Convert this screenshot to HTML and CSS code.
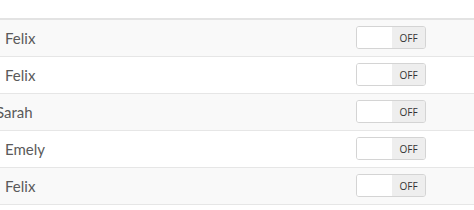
FILE: index.html
```html
<!DOCTYPE html>
<html lang="en">
<head>
  <meta charset="UTF-8" />
  <title>Users</title>
  <link rel="stylesheet" href="styles.css">
</head>
<body>
  <div class="lista">
    <div class="linha">
      <span class="nome">Felix</span>
      <span class="toggle"><span class="lado"></span><span class="off">OFF</span></span>
    </div>
    <div class="linha">
      <span class="nome">Felix</span>
      <span class="toggle"><span class="lado"></span><span class="off">OFF</span></span>
    </div>
    <div class="linha">
      <span class="nome recuado">Sarah</span>
      <span class="toggle"><span class="lado"></span><span class="off">OFF</span></span>
    </div>
    <div class="linha">
      <span class="nome">Emely</span>
      <span class="toggle"><span class="lado"></span><span class="off">OFF</span></span>
    </div>
    <div class="linha">
      <span class="nome">Felix</span>
      <span class="toggle"><span class="lado"></span><span class="off">OFF</span></span>
    </div>
  </div>
</body>
</html>
```

FILE: styles.css
```css
* { box-sizing: border-box; margin: 0; padding: 0; }

body {
  font-family: Lato, 'Open Sans', sans-serif;
  background: #fff;
  padding-top: 18px;
  overflow: hidden;
}

.lista {
  border-top: 2px solid #e3e3e3;
}

.linha {
  height: 37px;
  display: flex;
  align-items: center;
  border-bottom: 1px solid #e6e6e6;
}

.linha:nth-child(odd) {
  background: #f9f9f9;
}

.nome {
  width: 356px;
  padding-left: 5px;
  font-size: 15px;
  color: #5a5a5a;
}

.recuado {
  padding-left: 0;
  margin-left: -4px;
  width: 360px;
}

.toggle {
  display: flex;
  width: 70px;
  height: 23px;
  border: 1px solid #d4d4d4;
  border-radius: 3px;
  overflow: hidden;
  margin-top: -1px;
}

.lado {
  width: 35px;
  background: #fff;
}

.off {
  flex: 1;
  background: #eee;
  font-family: 'Open Sans', sans-serif;
  font-size: 10px;
  color: #333;
  display: flex;
  align-items: center;
  justify-content: center;
}
```
